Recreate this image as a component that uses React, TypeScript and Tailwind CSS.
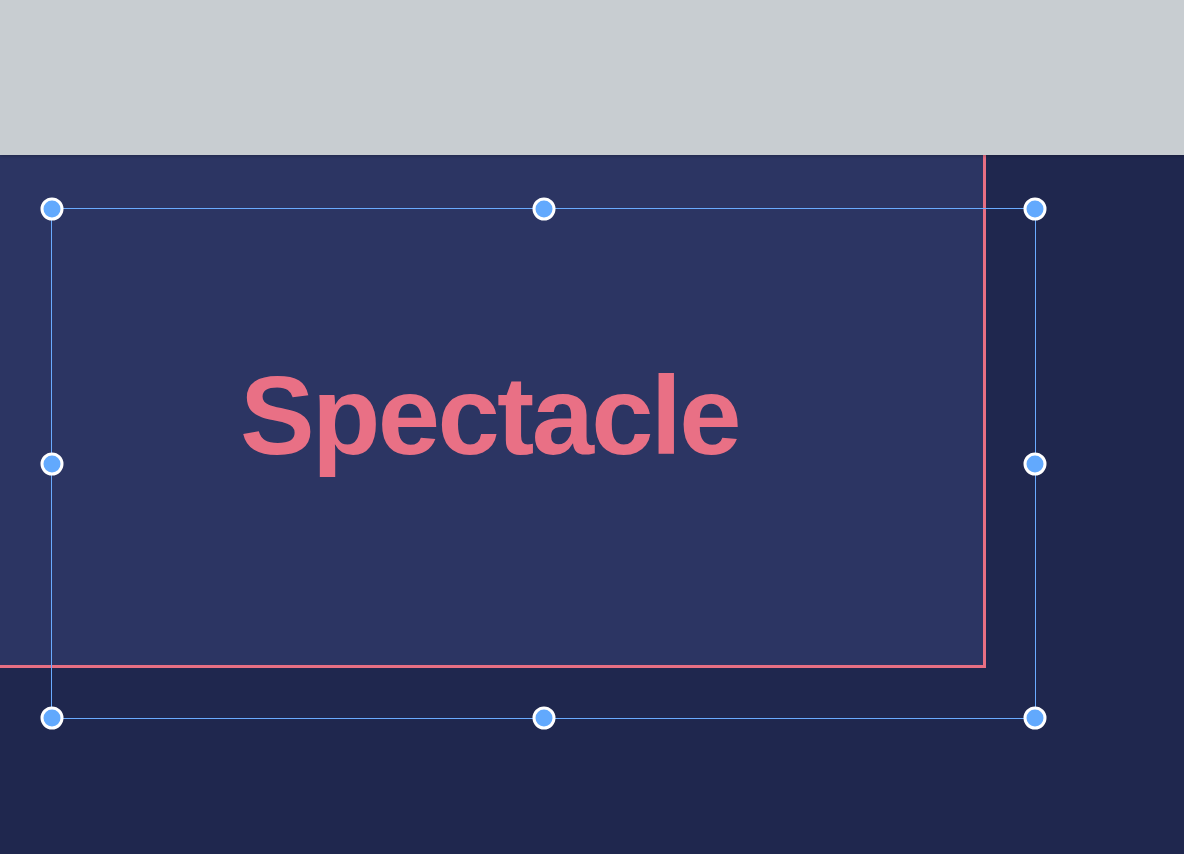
const handles = [
  'left-0 top-0',
  'left-1/2 top-0',
  'left-full top-0',
  'left-0 top-1/2',
  'left-full top-1/2',
  'left-0 top-full',
  'left-1/2 top-full',
  'left-full top-full'
]

export default function App() {
  return (
    <div className="flex h-[854px] w-[1184px] flex-col overflow-hidden bg-[#1f274e] font-['Liberation_Sans',Arial,sans-serif]">
      <div className="relative z-10 h-[155px] shrink-0 bg-[#c8cdd1] shadow-[0_1px_3px_rgba(0,0,0,0.25)]" />
      <div className="relative flex-1">
        <div className="flex h-[513px] w-[986px] items-center justify-center border-b-[3px] border-r-[3px] border-[#e76f83] bg-[#2c3563]">
          <h1 className="pr-[4px] pt-[11px] text-[112px] font-bold leading-none tracking-[-0.024em] text-[#e97085]">
            Spectacle
          </h1>
        </div>
        <div className="absolute left-[51px] top-[53px] h-[511px] w-[985px] border border-[#6aabff]">
          {handles.map((pos) => (
            <span
              key={pos}
              className={`absolute ${pos} h-[23px] w-[23px] -translate-x-1/2 -translate-y-1/2 rounded-full border-[3px] border-white bg-[#62a9fd]`}
            />
          ))}
        </div>
      </div>
    </div>
  )
}
